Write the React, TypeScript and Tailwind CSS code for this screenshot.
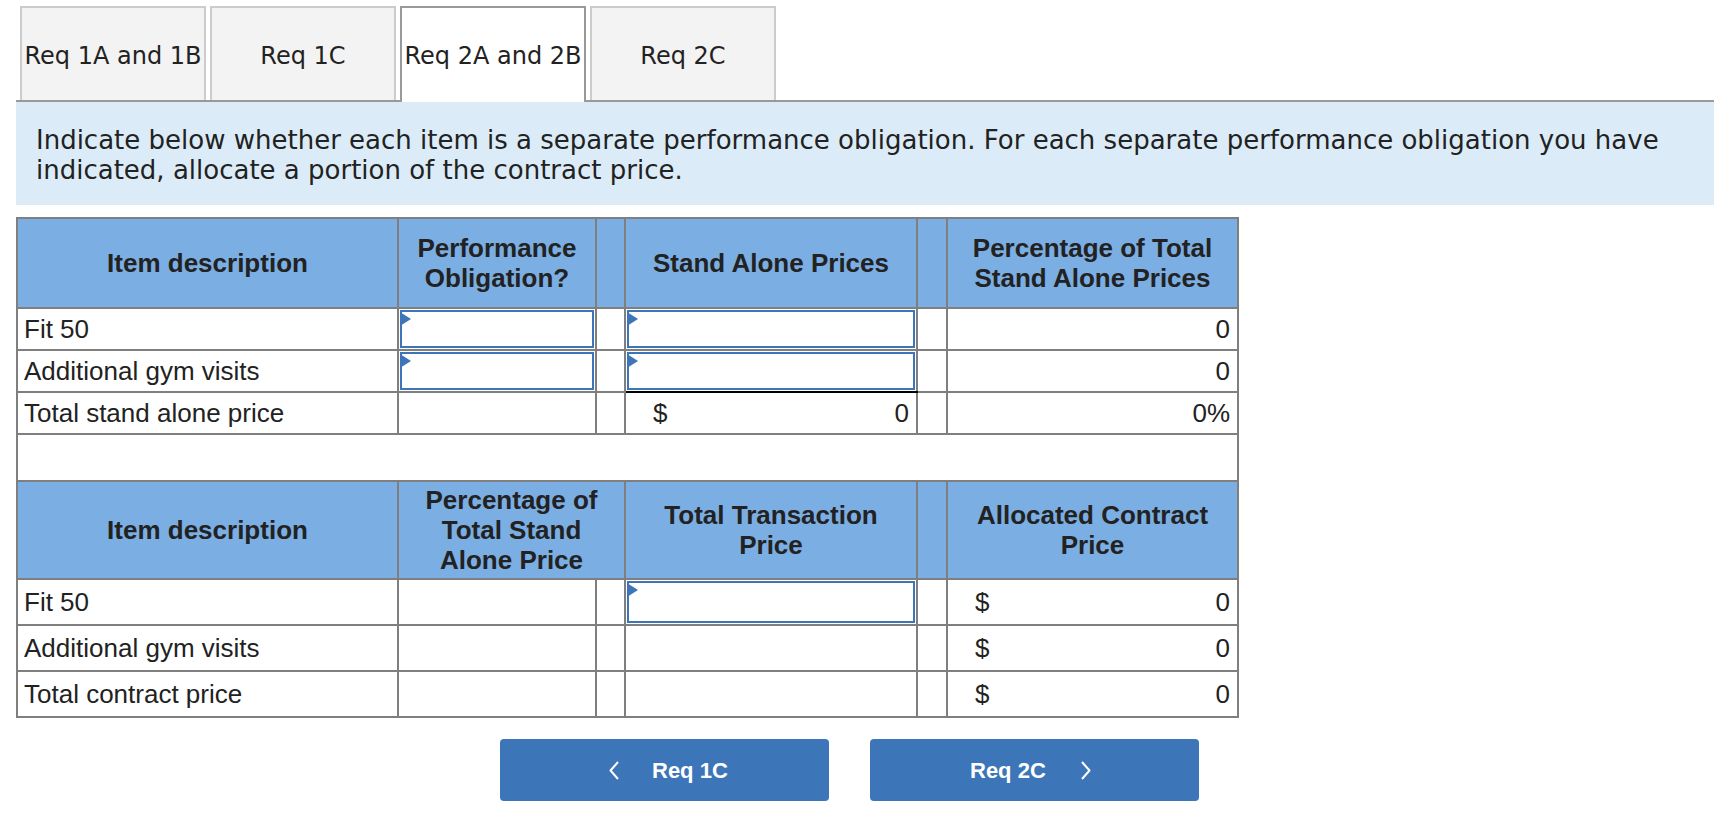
import React from 'react';

const tabs = [
  { label: 'Req 1A and 1B', active: false },
  { label: 'Req 1C', active: false },
  { label: 'Req 2A and 2B', active: true },
  { label: 'Req 2C', active: false },
];

const cell = 'border-2 border-[#7f7f7f] p-0';
const head = cell + ' bg-[#7baee3] text-center font-bold leading-[30px]';

function Field({ tall = false }: { tall?: boolean }) {
  return (
    <div className={(tall ? 'h-[42px]' : 'h-[38px]') + ' relative mx-[1px] border-2 border-[#3e75b9] bg-white'}>
      <svg className="absolute -left-[2px] top-0" width="11" height="14" viewBox="0 0 11 14">
        <polygon points="0,0 11,7 0,14" fill="#3e75b9" />
      </svg>
    </div>
  );
}

function Money({ value }: { value: string }) {
  return (
    <div className="flex justify-between pl-[27px] pr-[7px]">
      <span>$</span>
      <span>{value}</span>
    </div>
  );
}

function Chevron({ dir }: { dir: 'left' | 'right' }) {
  return (
    <svg width="10" height="19" viewBox="0 0 10 19" fill="none">
      <polyline
        points={dir === 'left' ? '9,1 1.5,9.5 9,18' : '1,1 8.5,9.5 1,18'}
        stroke="white"
        strokeWidth="2"
        strokeLinejoin="round"
      />
    </svg>
  );
}

export default function App() {
  return (
    <div className="min-h-screen bg-white pt-[6px] text-[#222]">
      {/* Tabs */}
      <div className="ml-[16px] flex h-[96px] items-end border-b-2 border-[#999] font-['DejaVu_Sans',sans-serif] text-[24px]">
        {tabs.map((t) => (
          <div
            key={t.label}
            className={
              t.active
                ? 'relative z-10 -mb-[2px] ml-[4px] flex h-[96px] w-[186px] items-center justify-center whitespace-nowrap border-2 border-b-0 border-[#999] bg-white pt-[2px]'
                : 'ml-[4px] flex h-[94px] w-[186px] items-center justify-center whitespace-nowrap border-2 border-b-0 border-[#ccc] bg-[#f3f3f3] pt-[4px]'
            }
          >
            {t.label}
          </div>
        ))}
      </div>

      {/* Instructions */}
      <div className="ml-[16px] h-[103px] whitespace-nowrap bg-[#dbecf8] pl-[20px] pt-[23px] font-['DejaVu_Sans',sans-serif] text-[26px] leading-[30px]">
        Indicate below whether each item is a separate performance obligation. For each separate performance obligation you have
        <br />
        indicated, allocate a portion of the contract price.
      </div>

      {/* Allocation table */}
      <table className="ml-[16px] mt-[12px] w-[1221px] table-fixed border-collapse font-['Liberation_Sans',Arial,sans-serif] text-[26px] leading-[30px]">
        <colgroup>
          <col className="w-[381px]" />
          <col className="w-[198px]" />
          <col className="w-[29px]" />
          <col className="w-[292px]" />
          <col className="w-[30px]" />
          <col className="w-[291px]" />
        </colgroup>
        <tbody>
          <tr className="h-[90px]">
            <td className={head}>Item description</td>
            <td className={head}>
              Performance
              <br />
              Obligation?
            </td>
            <td className={head}></td>
            <td className={head}>Stand Alone Prices</td>
            <td className={head}></td>
            <td className={head}>
              Percentage of Total
              <br />
              Stand Alone Prices
            </td>
          </tr>
          <tr className="h-[42px]">
            <td className={cell + ' pl-[6px]'}>Fit 50</td>
            <td className={cell + ' py-[1px]'}>
              <Field />
            </td>
            <td className={cell}></td>
            <td className={cell + ' py-[1px]'}>
              <Field />
            </td>
            <td className={cell}></td>
            <td className={cell + ' pr-[7px] text-right'}>0</td>
          </tr>
          <tr className="h-[42px]">
            <td className={cell + ' pl-[6px]'}>Additional gym visits</td>
            <td className={cell + ' py-[1px]'}>
              <Field />
            </td>
            <td className={cell}></td>
            <td className="border-2 border-[#7f7f7f] border-b-black p-0 py-[1px]">
              <Field />
            </td>
            <td className={cell}></td>
            <td className={cell + ' pr-[7px] text-right'}>0</td>
          </tr>
          <tr className="h-[42px]">
            <td className={cell + ' pl-[6px]'}>Total stand alone price</td>
            <td className={cell}></td>
            <td className={cell}></td>
            <td className="border-2 border-[#7f7f7f] border-t-black p-0">
              <Money value="0" />
            </td>
            <td className={cell}></td>
            <td className={cell + ' pr-[7px] text-right'}>0%</td>
          </tr>
          <tr className="h-[47px]">
            <td className={cell} colSpan={6}></td>
          </tr>
          <tr className="h-[98px]">
            <td className={head}>Item description</td>
            <td className={head} colSpan={2}>
              Percentage of
              <br />
              Total Stand
              <br />
              Alone Price
            </td>
            <td className={head}>
              Total Transaction
              <br />
              Price
            </td>
            <td className={head}></td>
            <td className={head}>
              Allocated Contract
              <br />
              Price
            </td>
          </tr>
          <tr className="h-[46px]">
            <td className={cell + ' pl-[6px]'}>Fit 50</td>
            <td className={cell}></td>
            <td className={cell}></td>
            <td className={cell + ' py-[1px]'}>
              <Field tall />
            </td>
            <td className={cell}></td>
            <td className={cell}>
              <Money value="0" />
            </td>
          </tr>
          <tr className="h-[46px]">
            <td className={cell + ' pl-[6px]'}>Additional gym visits</td>
            <td className={cell}></td>
            <td className={cell}></td>
            <td className={cell}></td>
            <td className={cell}></td>
            <td className={cell}>
              <Money value="0" />
            </td>
          </tr>
          <tr className="h-[46px]">
            <td className={cell + ' pl-[6px]'}>Total contract price</td>
            <td className={cell}></td>
            <td className={cell}></td>
            <td className={cell}></td>
            <td className={cell}></td>
            <td className={cell}>
              <Money value="0" />
            </td>
          </tr>
        </tbody>
      </table>

      {/* Navigation */}
      <div className="flex gap-[41px] pl-[500px] pt-[21px] font-['Liberation_Sans',Arial,sans-serif] text-[22px] font-bold text-white">
        <button className="flex h-[62px] w-[329px] items-center gap-[33px] rounded-[4px] bg-[#3c76b8] pl-[109px]">
          <Chevron dir="left" />
          <span>Req 1C</span>
        </button>
        <button className="flex h-[62px] w-[329px] items-center gap-[35px] rounded-[4px] bg-[#3c76b8] pl-[100px]">
          <span>Req 2C</span>
          <Chevron dir="right" />
        </button>
      </div>
    </div>
  );
}
